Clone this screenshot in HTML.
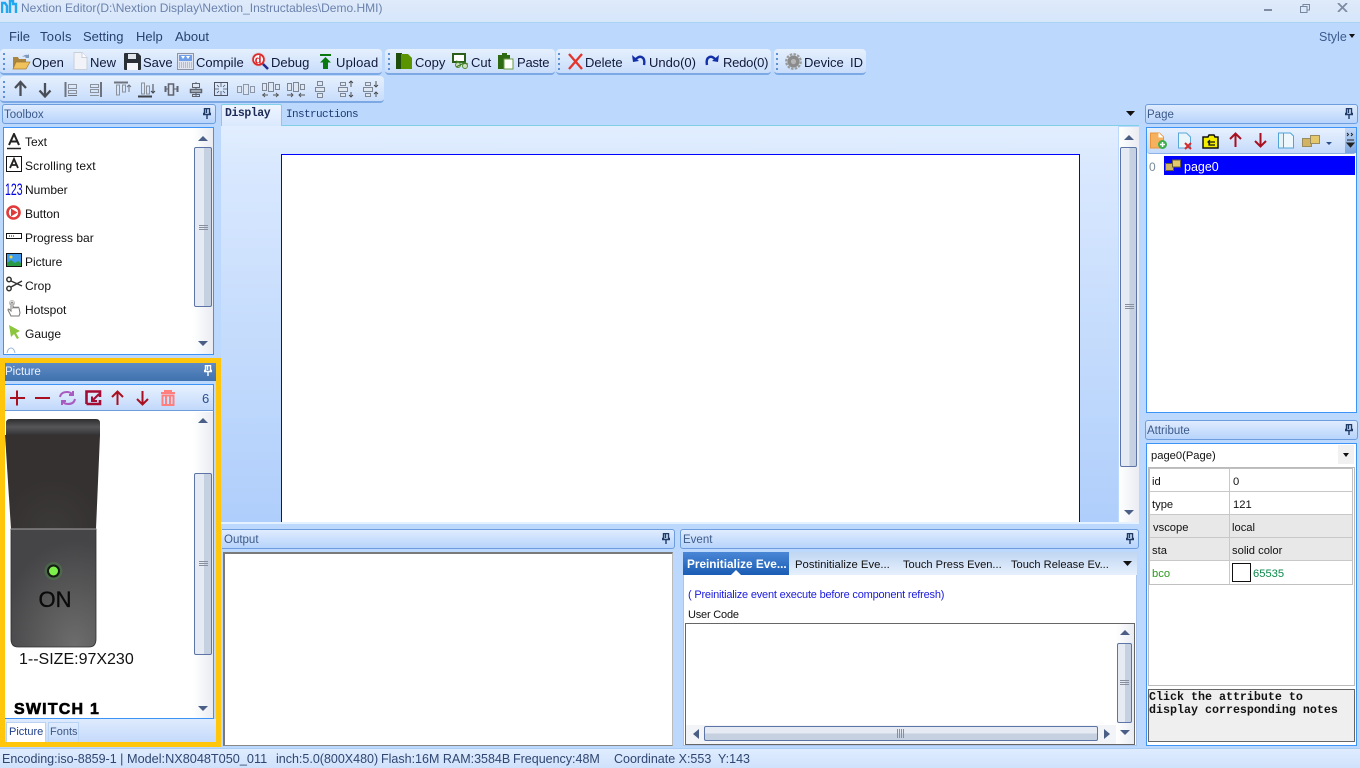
<!DOCTYPE html>
<html><head><meta charset="utf-8"><title>Nextion Editor</title>
<style>
*{box-sizing:border-box}
html,body{margin:0;padding:0;width:1360px;height:768px;overflow:hidden}
body{position:relative;background:#bcd9fd;font:12px "Liberation Sans",sans-serif;color:#111}
.a,.t,svg.i{position:absolute}
.t{white-space:nowrap;line-height:16px}
.tb{font-size:13px;color:#11193a}
.bar{position:absolute;background:linear-gradient(#e6f0fd,#c8ddfb);border-radius:4px;border-bottom:2px solid #7ca8e4}
.grip{position:absolute;width:2px;height:18px;background:repeating-linear-gradient(#5b8fd6 0 2px,transparent 2px 5px)}
.hd{position:absolute;background:linear-gradient(#e0ecfe,#b7d4fc);border:1px solid #6d9ddd;border-radius:3px;color:#2c4a78;padding-left:1px;line-height:20px;font-size:11.500px}
.pin{position:absolute;width:8px;height:11px;right:4px;top:3px}
.pin path{stroke-width:1.400}
.pn{position:absolute;background:#fff;border:1px solid #3d94f6}
.sb{position:absolute;background:linear-gradient(90deg,#fff,#e9ecf2)}
.th{position:absolute;border:1px solid #5c75a6;border-radius:2px;background:linear-gradient(90deg,#e6eaf2 0 55%,#c5d0e0 55%)}
.ln{position:absolute;background:#c8c8c8}
.cell{position:absolute;font-size:11.200px;line-height:24px;padding-left:3px}
</style></head><body>

<!-- title bar -->
<div class="a" style="left:0;top:0;width:1360px;height:23px;background:linear-gradient(#dfeafa,#d6e6fb);border-bottom:1px solid #a9d2f2"></div>
<svg class="i" style="left:1px;top:0" width="17" height="14" viewBox="0 0 17 14"><path d="M1 13V3h3l2 3v7M9 13V1h3v3h3v9" fill="none" stroke="#22a8ee" stroke-width="2.400"/></svg>
<div class="t" style="left:21px;top:0;font-size:12px;color:#6b82ac">Nextion Editor(D:\Nextion Display\Nextion_Instructables\Demo.HMI)</div>
<div class="a" style="left:1264px;top:9px;width:8px;height:2px;background:#7d8ca3"></div>
<svg class="i" style="left:1300px;top:4px" width="10" height="9"><path d="M.5 2.500h6.500v6H.5zM3 2.500V.5h6.500v5.500H7" fill="none" stroke="#77879f"/></svg>
<svg class="i" style="left:1337px;top:3px" width="11" height="9"><path d="M1 0l9 9M10 0L1 9" stroke="#7d8ca3" stroke-width="1.800"/></svg>

<!-- menu -->
<div class="t tb" style="left:9px;top:29px;color:#28416e">File</div>
<div class="t tb" style="left:40px;top:29px;color:#28416e;letter-spacing:.3px">Tools</div>
<div class="t tb" style="left:83px;top:29px;color:#28416e">Setting</div>
<div class="t tb" style="left:136px;top:29px;color:#28416e">Help</div>
<div class="t tb" style="left:175px;top:29px;color:#28416e">About</div>
<div class="t tb" style="left:1319px;top:29px;color:#3c5a8e;font-size:12.500px">Style</div>
<svg class="i" style="left:1349px;top:34px" width="6" height="4"><path d="M0 0h6L3 4z" fill="#111"/></svg>

<!-- toolbar row 1 -->
<div class="bar" style="left:0;top:49px;width:382px;height:26px"></div>
<div class="grip" style="left:3px;top:53px"></div>
<svg class="i" style="left:12px;top:53px" width="19" height="17"><path d="M1 4h5l1 2h7v3H5L2 15H1z" fill="#a9853f"/><path d="M4 9h14l-4 7H1z" fill="#f0c25c" stroke="#a67c2e" stroke-width=".7"/><path d="M10 4q3-3 6-2l1-1v4h-4l1-1q-2-1-4 0z" fill="#7d99bd"/></svg>
<div class="t tb" style="left:32px;top:55px">Open</div>
<svg class="i" style="left:73px;top:52px" width="15" height="18"><path d="M1 .5h8l5 5v12H1z" fill="#f1f3f8" stroke="#c9cfdc"/><path d="M9 .5v5h5" fill="#fff" stroke="#c9cfdc"/></svg>
<div class="t tb" style="left:90px;top:55px">New</div>
<svg class="i" style="left:124px;top:53px" width="17" height="17"><path d="M0 1q0-1 1-1h13l3 3v13q0 1-1 1H1q-1 0-1-1z" fill="#2a3036"/><rect x="4" y="1" width="8" height="5" fill="#dfe4ea"/><rect x="3" y="10" width="11" height="7" fill="#f4f6fa"/></svg>
<div class="t tb" style="left:143px;top:55px">Save</div>
<svg class="i" style="left:177px;top:53px" width="17" height="17"><rect x=".5" y=".5" width="16" height="16" fill="#dfe4ee" stroke="#8d94a6"/><rect x="2" y="2" width="13" height="6" fill="#6f9fe8"/><path d="M4 3l2 3 2-3zM9 3l2 3 2-3z" fill="#fff"/><path d="M2 10h13M2 12h13M2 14h13" stroke="#8d94a6" stroke-dasharray="1 1"/></svg>
<div class="t tb" style="left:196px;top:55px">Compile</div>
<svg class="i" style="left:251px;top:52px" width="18" height="18"><circle cx="7.500" cy="7.500" r="6.800" fill="#e0292b" stroke="#d8d8e0"/><circle cx="7.500" cy="7.500" r="4.500" fill="#fff"/><text x="3.800" y="11.500" font-size="11" font-weight="bold" fill="#d8232a" font-family="Liberation Sans">d</text><path d="M12 12l5 5" stroke="#232a8a" stroke-width="2.500"/></svg>
<div class="t tb" style="left:271px;top:55px">Debug</div>
<svg class="i" style="left:319px;top:54px" width="13" height="15"><path d="M1 1h11" stroke="#0a7a10" stroke-width="2"/><path d="M6.500 3L12 8.500H9V15H4V8.500H1z" fill="#0a7a10"/></svg>
<div class="t tb" style="left:336px;top:55px;letter-spacing:.2px">Upload</div>

<div class="bar" style="left:385px;top:49px;width:170px;height:26px"></div>
<div class="grip" style="left:388px;top:53px"></div>
<svg class="i" style="left:396px;top:53px" width="17" height="17"><path d="M0 0h6v16H0z" fill="#1f4d0b"/><path d="M5 1h7l4 4v11H5z" fill="#5a9400"/></svg>
<div class="t tb" style="left:415px;top:55px">Copy</div>
<svg class="i" style="left:452px;top:53px" width="17" height="17"><path d="M1 1h12v8H1z" fill="#fff" stroke="#2b5e1a" stroke-width="2"/><circle cx="6" cy="12" r="2.500" fill="#cfe0c0" stroke="#4f8a32"/><circle cx="13" cy="13" r="2.500" fill="#cfe0c0" stroke="#4f8a32"/><path d="M4 8l12 3M4 14l10-5" stroke="#3c7a26"/></svg>
<div class="t tb" style="left:471px;top:55px">Cut</div>
<svg class="i" style="left:498px;top:53px" width="16" height="17"><path d="M0 2h4V0h5v2h3v14H0z" fill="#2e6a14"/><path d="M6 6h9v10H6z" fill="#fff" stroke="#6a9a48"/></svg>
<div class="t tb" style="left:517px;top:55px;letter-spacing:-.2px">Paste</div>

<div class="bar" style="left:556px;top:49px;width:215px;height:26px"></div>
<div class="grip" style="left:558px;top:53px"></div>
<svg class="i" style="left:568px;top:53px" width="15" height="17"><path d="M1 1l13 15M14 1L1 16" stroke="#e2342c" stroke-width="2.300"/></svg>
<div class="t tb" style="left:585px;top:55px">Delete</div>
<svg class="i" style="left:632px;top:54px" width="14" height="13"><path d="M4 5q4-4 7-1 2 2 1 7" fill="none" stroke="#1430a8" stroke-width="2.400"/><path d="M0 1l1 7 6-1z" fill="#1430a8"/></svg>
<div class="t tb" style="left:649px;top:55px">Undo(0)</div>
<svg class="i" style="left:705px;top:54px" width="14" height="13"><path d="M10 5Q6 1 3 4q-2 2-1 7" fill="none" stroke="#1430a8" stroke-width="2.400"/><path d="M14 1l-1 7-6-1z" fill="#1430a8"/></svg>
<div class="t tb" style="left:723px;top:55px;letter-spacing:-.25px">Redo(0)</div>

<div class="bar" style="left:774px;top:49px;width:92px;height:26px"></div>
<div class="grip" style="left:776px;top:53px"></div>
<svg class="i" style="left:785px;top:53px" width="17" height="17"><circle cx="8.500" cy="8.500" r="6" fill="#8b8b8b"/><circle cx="8.500" cy="8.500" r="7.300" fill="none" stroke="#9a9a9a" stroke-width="2.200" stroke-dasharray="2.500 1.300"/><circle cx="8.500" cy="8.500" r="2.600" fill="#b5b5b5"/></svg>
<div class="t tb" style="left:804px;top:55px">Device</div>
<div class="t tb" style="left:850px;top:55px">ID</div>

<!-- toolbar row 2 -->
<div class="bar" style="left:0;top:76px;width:384px;height:27px"></div>
<div class="grip" style="left:3px;top:81px"></div>
<svg class="i" style="left:12px;top:80px" width="372" height="18" fill="none" stroke="#4a4f57">
<path d="M8.500 16V3M3 8l5.500-6L14 8M33 3v13M27.500 10.500L33 16.500l5.500-6" stroke-width="2.300"/>
<g stroke="#6d7480"><path d="M53.500 2v15" stroke-width="2"/><path d="M56.500 4.500h8v4h-8zM56.500 10.500h8v3h-8z" stroke="#8b929c"/><path d="M56 15.500h9" stroke-width="1"/>
<path d="M89 2v15" stroke-width="2"/><path d="M78.500 4.500h8v3h-8zM78.500 9.500h8v3h-8zM78 15.500h9" stroke="#8b929c"/></g>
<g stroke="#6d7480"><path d="M102 2.500h14" stroke-width="2"/><path d="M104.500 5v10h3V5zM110.500 5v7h3V5z" stroke="#8b929c"/><path d="M117 12V5M115 7l2-2 2 2"/></g>
<g stroke="#3e4248"><path d="M126 16.500h14" stroke-width="2"/><path d="M129.500 14V3h3v11zM134.500 14V6h3v8z" stroke="#8b929c"/><path d="M141 4v9M139 11l2 2 2-2"/></g>
<g stroke="#5e6470"><path d="M154 9h12"/><path d="M156.500 4v11h5V4z" fill="#dce6f5" stroke-width="1.600"/><path d="M153.500 6v6M165.500 6v6" stroke-width="2"/></g>
<g stroke="#5e6470"><path d="M184 2v15"/><path d="M180.500 3.500h7v4h-7z" fill="#dce6f5"/><path d="M178.500 9.500h11v3h-11z" fill="#b9c1cc" stroke-width="1.500"/><path d="M180.500 14.500h7v2h-7z"/></g>
<g stroke="#4c5260"><rect x="202.500" y="2.500" width="13" height="13"/><path d="M209 3v4M209 11v4M203 9h4M211 9h4M205 5l2 2M213 5l-2 2M205 13l2-2M213 13l-2-2" stroke-width=".8"/></g>
<g stroke="#8b97aa" fill="#dfe7f3"><rect x="225.500" y="6.500" width="4" height="6"/><rect x="231.500" y="4.500" width="5" height="10"/><rect x="238.500" y="6.500" width="4" height="6"/></g>
<g stroke="#7d8796" fill="#dfe7f3"><rect x="250.500" y="3.500" width="4" height="7"/><rect x="256.500" y="2.500" width="5" height="9"/><rect x="263.500" y="4.500" width="4" height="5"/></g><path d="M250 15h6M253 13l-2 2 2 2M261 15h6M264 13l2 2-2 2" stroke="#555" stroke-width=".9"/>
<g stroke="#7d8796" fill="#dfe7f3"><rect x="275.500" y="3.500" width="4" height="7"/><rect x="281.500" y="2.500" width="5" height="9"/><rect x="288.500" y="4.500" width="4" height="5"/></g><path d="M275 15h6M279 13l2 2-2 2M287 15h6M289 13l-2 2 2 2" stroke="#555" stroke-width=".9"/>
<g stroke="#7d8796" fill="#dfe7f3"><rect x="305.500" y="1.500" width="5" height="4"/><rect x="303.500" y="7.500" width="9" height="4"/><rect x="305.500" y="13.500" width="5" height="4"/></g>
<g stroke="#7d8796" fill="#dfe7f3"><rect x="328.500" y="2.500" width="5" height="3"/><rect x="326.500" y="7.500" width="9" height="4"/><rect x="328.500" y="13.500" width="5" height="3"/></g>
<path d="M339 1v6M337 3l2-2 2 2M339 12v5M337 15l2 2 2-2" stroke="#444" stroke-width=".9"/>
<g stroke="#7d8796" fill="#dfe7f3"><rect x="353.500" y="2.500" width="5" height="3"/><rect x="351.500" y="7.500" width="9" height="4"/><rect x="353.500" y="13.500" width="5" height="3"/></g>
<path d="M364 1v6M362 5l2 2 2-2M364 12v5M362 14l2-2 2 2" stroke="#444" stroke-width=".9"/>
</svg>

<!-- toolbox -->
<div class="hd" style="left:2px;top:104px;width:214px;height:20px;color:#3c5a8a">Toolbox<svg class="pin" viewBox="0 0 8 11"><path d="M1.500.5h5v5h1v1H.5v-1h1zM4 7v4M3.500 1v4" fill="none" stroke="#1f3b66"/></svg></div>
<div class="pn" style="left:3px;top:127px;width:211px;height:228px;overflow:hidden"></div>
<svg class="i" style="left:6px;top:133px" width="17" height="17"><path d="M3 12L8 1l5 11M5 8.500h6" fill="none" stroke="#222" stroke-width="2"/><path d="M1 15.500h14" stroke="#222" stroke-width="1.500"/></svg>
<div class="t" style="left:25px;top:134px">Text</div>
<svg class="i" style="left:6px;top:156px" width="16" height="16"><rect x=".5" y=".5" width="15" height="15" fill="#fff" stroke="#111"/><path d="M4 12l4-9 4 9M5.500 9h5" fill="none" stroke="#222" stroke-width="1.800"/></svg>
<div class="t" style="left:25px;top:158px;letter-spacing:.15px">Scrolling text</div>
<div class="t" style="left:5px;top:181px;font-size:17px;line-height:17px;color:#0000e0;transform:scaleX(.62);transform-origin:left top">123</div>
<div class="t" style="left:25px;top:182px">Number</div>
<svg class="i" style="left:6px;top:205px" width="15" height="15"><circle cx="7.500" cy="7.500" r="6" fill="#fff" stroke="#e03a3a" stroke-width="2.600"/><path d="M5 3.500l6.500 4-6.500 4z" fill="#e03a3a"/></svg>
<div class="t" style="left:25px;top:206px">Button</div>
<svg class="i" style="left:6px;top:233px" width="16" height="7"><rect x=".5" y=".5" width="15" height="5" fill="#fff" stroke="#111"/><path d="M3 3h5" stroke="#111" stroke-dasharray="1 1"/></svg>
<div class="t" style="left:25px;top:230px">Progress bar</div>
<svg class="i" style="left:6px;top:253px" width="16" height="14"><rect width="16" height="14" fill="#111"/><rect x="1" y="1" width="14" height="12" fill="#3f9bea"/><path d="M1 13V10l4-3 4 3 3-2 3 2v3z" fill="#2a9a44"/><circle cx="5" cy="4" r="1.500" fill="#f3d63a"/></svg>
<div class="t" style="left:25px;top:254px">Picture</div>
<svg class="i" style="left:6px;top:276px" width="17" height="16" fill="none" stroke="#333" stroke-width="1.500"><circle cx="3" cy="3.500" r="2.200"/><circle cx="3" cy="12.500" r="2.200"/><path d="M5 5l11 5M5 11L16 5"/></svg>
<div class="t" style="left:25px;top:278px">Crop</div>
<svg class="i" style="left:7px;top:300px" width="15" height="17" fill="none" stroke="#777"><path d="M4 16L1 10q0-2 2 0l1 1V3q1-2 2 0v5l1-1 1 1 1-1 1 1 1-1 1 1 1 5-1 3z" fill="#fff"/><circle cx="5" cy="3" r="2.500" stroke="#bbb"/></svg>
<div class="t" style="left:25px;top:302px">Hotspot</div>
<svg class="i" style="left:8px;top:325px" width="13" height="14"><path d="M1 0l11 6-4 2 3 5-2 1-3-5-3 3z" fill="#8cc63f"/></svg>
<div class="t" style="left:25px;top:326px">Gauge</div>
<svg class="i" style="left:6px;top:347px" width="10" height="6"><path d="M1 6q1-5 4-5t4 5" fill="none" stroke="#9cb6d8"/></svg>
<!-- toolbox scrollbar -->
<div class="sb" style="left:193px;top:128px;width:20px;height:226px"></div>
<svg class="i" style="left:198px;top:136px" width="10" height="6"><path d="M0 5l5-5 5 5z" fill="#4a5e86"/></svg>
<div class="th" style="left:194px;top:147px;width:18px;height:160px"></div>
<div class="a" style="left:199px;top:225px;width:9px;height:6px;background:repeating-linear-gradient(#8890a0 0 1px,transparent 1px 2px)"></div>
<svg class="i" style="left:198px;top:341px" width="10" height="6"><path d="M0 0l5 5 5-5z" fill="#4a5e86"/></svg>

<!-- picture panel (yellow highlight) -->
<div class="a" style="left:0;top:358px;width:221px;height:389px;border:5px solid #ffc60b;background:#bcd9fd"></div>
<div class="a" style="left:5px;top:363px;width:211px;height:18px;background:linear-gradient(#5f8ac3,#3f72ae);color:#e9f0fb;line-height:19px;font-size:11.500px">Picture<svg class="pin" style="right:4px;top:2px" viewBox="0 0 8 11"><path d="M1.500.5h5v5h1v1H.5v-1h1zM4 7v4M3.500 1v4" fill="none" stroke="#fff"/></svg></div>
<div class="a" style="left:5px;top:384px;width:209px;height:335px;background:#fff;border:1px solid #3d94f6;border-left:0"></div>
<div class="a" style="left:5px;top:385px;width:208px;height:26px;background:linear-gradient(#e8f1fe,#c2d9fb);border-bottom:1px solid #6d9ddd"></div>
<svg class="i" style="left:9px;top:390px" width="170" height="16" fill="none">
<path d="M8 .5v15M1 8h15M26 8h15" stroke="#a80f1f" stroke-width="2"/>
<path d="M51 7q1-5 7-5 3 0 5 2M66 9q-1 5-7 5-3 0-5-2M64 1v4h-4M53 15v-4h4" stroke="#a85cc0" stroke-width="2"/>
<path d="M77.500 14V1.500H91V7M77.500 14H91V10" stroke="#a50c34" stroke-width="2.600"/><path d="M90 4l-7 7M83 6.500V11h5" stroke="#a50c34" stroke-width="2"/>
<path d="M108.500 15V2M103 7l5.500-5.500L114 7M133.500 1v13M128 9l5.500 5.500L139 9" stroke="#a80f1f" stroke-width="2"/>
<path d="M152 3h14M156 3V1h6v2M153.500 5.500h11V15h-11zM157 6v9M161 6v9" stroke="#ff7f7f" stroke-width="2"/>
</svg>
<div class="t" style="left:202px;top:391px;color:#2d4f8c;font-size:13px">6</div>

<svg class="i" style="left:5px;top:418px" width="96" height="232" viewBox="0 0 96 232">
<defs><linearGradient id="g1" x1="0" x2="0" y1="0" y2="1"><stop offset="0" stop-color="#2d2c2d"/><stop offset=".5" stop-color="#57575a"/><stop offset="1" stop-color="#343335"/></linearGradient>
<radialGradient id="g2" cx=".75" cy="1" r=".9"><stop offset="0" stop-color="#6d6d6d"/><stop offset="1" stop-color="#454547"/></radialGradient>
<radialGradient id="g3" cx=".5" cy="1" r=".55"><stop offset="0" stop-color="#3c3a38"/><stop offset="1" stop-color="#343130"/></radialGradient></defs>
<path d="M1 17V5q0-4 4-4h86q4 0 4 4v12z" fill="url(#g1)"/>
<path d="M0 17h95l-4 94H6z" fill="url(#g3)"/>
<path d="M6 111h85v110q0 8-7 8H13q-7 0-7-8z" fill="url(#g2)" stroke="#2e2e2e" stroke-width=".8"/>
<path d="M6 111h85" stroke="#a5a5a5"/>
<circle cx="48.500" cy="153" r="9" fill="#4b7a47" opacity=".55"/><circle cx="48.500" cy="153" r="6.500" fill="#141a12"/><circle cx="48.500" cy="153" r="4.500" fill="#7df04a"/>
<text x="33.500" y="189" font-family="Liberation Sans" font-size="22" fill="#0a0a0a" stroke="#0a0a0a" stroke-width=".3">ON</text>
</svg>
<div class="t" style="left:19px;top:652px;font-size:16px;color:#111">1--SIZE:97X230</div>
<div class="t" style="left:14px;top:702px;font-size:16px;font-weight:bold;color:#000;letter-spacing:1.200px;-webkit-text-stroke:.6px #000">SWITCH 1</div>
<div class="sb" style="left:193px;top:412px;width:20px;height:306px"></div>
<svg class="i" style="left:198px;top:418px" width="10" height="6"><path d="M0 5l5-5 5 5z" fill="#4a5e86"/></svg>
<div class="th" style="left:194px;top:473px;width:18px;height:182px"></div>
<div class="a" style="left:199px;top:561px;width:9px;height:6px;background:repeating-linear-gradient(#8890a0 0 1px,transparent 1px 2px)"></div>
<svg class="i" style="left:198px;top:706px" width="10" height="6"><path d="M0 0l5 5 5-5z" fill="#4a5e86"/></svg>
<div class="a" style="left:5px;top:719px;width:211px;height:23px;background:linear-gradient(#dfebfd,#c4dafb)"></div>
<div class="a" style="left:6px;top:722px;width:40px;height:20px;background:#fff;border:1px solid #b9d3f4;border-bottom:0"></div>
<div class="t" style="left:9px;top:724px;color:#20408a;font-size:11px">Picture</div>
<div class="a" style="left:48px;top:722px;width:31px;height:20px;background:linear-gradient(#e0ecfe,#c5dbfb);border:1px solid #b9d3f4;border-bottom:0"></div>
<div class="t" style="left:50px;top:724px;color:#3a5686;font-size:11px">Fonts</div>

<!-- center tabs -->
<div class="a" style="left:221px;top:104px;width:61px;height:22px;background:linear-gradient(#eef5ff,#dbe9fe);border:1px solid #7fcfe6;border-bottom:0;border-radius:2px 2px 0 0"></div>
<div class="t" style="left:225px;top:106px;font:bold 11.500px/16px 'Liberation Mono',monospace;letter-spacing:-.45px;color:#1d2a55">Display</div>
<div class="t" style="left:286px;top:107px;font:11px/16px 'Liberation Mono',monospace;letter-spacing:-.6px;color:#1d3a74">Instructions</div>
<svg class="i" style="left:1126px;top:111px" width="9" height="5"><path d="M0 0h9L4.500 5z" fill="#111"/></svg>
<div class="a" style="left:282px;top:125px;width:857px;height:1px;background:#7fcfe6"></div>
<div class="a" style="left:221px;top:126px;width:897px;height:397px;background:linear-gradient(#e2eeff 0,#d9e8fe 10%,#afcefb 100%)"></div>
<div class="a" style="left:281px;top:154px;width:799px;height:369px;background:#fff;border:1px solid #00f;border-bottom:0"></div>
<div class="sb" style="left:1119px;top:127px;width:20px;height:396px"></div>
<svg class="i" style="left:1124px;top:135px" width="10" height="6"><path d="M0 5l5-5 5 5z" fill="#4a5e86"/></svg>
<div class="th" style="left:1120px;top:147px;width:17px;height:320px"></div>
<div class="a" style="left:1125px;top:304px;width:9px;height:6px;background:repeating-linear-gradient(#8890a0 0 1px,transparent 1px 2px)"></div>
<svg class="i" style="left:1124px;top:510px" width="10" height="6"><path d="M0 0l5 5 5-5z" fill="#4a5e86"/></svg>
<div class="a" style="left:221px;top:522px;width:918px;height:2px;background:#e4f1ff"></div>

<!-- output -->
<div class="hd" style="left:222px;top:529px;width:453px;height:20px;border-left:0;border-radius:0 3px 3px 0;color:#3c5a8a;padding-left:2px">Output<svg class="pin" viewBox="0 0 8 11"><path d="M1.500.5h5v5h1v1H.5v-1h1zM4 7v4M3.500 1v4" fill="none" stroke="#1f3b66"/></svg></div>
<div class="a" style="left:223px;top:552px;width:450px;height:194px;background:#fff;border:2px solid #7a7a7a;border-right:1px solid #bbb;border-bottom:1px solid #888"></div>

<!-- event -->
<div class="hd" style="left:680px;top:529px;width:459px;height:20px;color:#3c5a8a;padding-left:2px">Event<svg class="pin" viewBox="0 0 8 11"><path d="M1.500.5h5v5h1v1H.5v-1h1zM4 7v4M3.500 1v4" fill="none" stroke="#1f3b66"/></svg></div>
<div class="a" style="left:683px;top:552px;width:454px;height:23px;background:linear-gradient(#c0d6f2,#e6f0fd)"></div>
<div class="a" style="left:683px;top:552px;width:106px;height:23px;background:linear-gradient(#4a87d6,#1a5cb4)"></div>
<svg class="i" style="left:730px;top:570px" width="12" height="6"><path d="M0 6l6-6 6 6z" fill="#fff"/></svg>
<div class="t" style="left:687px;top:556px;color:#fff;font-weight:bold;font-size:11.800px">Preinitialize Eve...</div>
<div class="t" style="left:795px;top:557px;font-size:11.300px">Postinitialize Eve...</div>
<div class="t" style="left:903px;top:557px;font-size:11.100px">Touch Press Even...</div>
<div class="t" style="left:1011px;top:557px;font-size:11.100px">Touch Release Ev...</div>
<svg class="i" style="left:1123px;top:561px" width="9" height="5"><path d="M0 0h9L4.500 5z" fill="#111"/></svg>
<div class="a" style="left:683px;top:575px;width:454px;height:171px;background:#fff;border:1px solid #a9c6ea;border-top:0"></div>
<div class="t" style="left:688px;top:587px;color:#1a1adc;font-size:11px;letter-spacing:-.2px">( Preinitialize event execute before component refresh)</div>
<div class="t" style="left:688px;top:607px;font-size:11px;letter-spacing:-.2px">User Code</div>
<div class="a" style="left:685px;top:623px;width:450px;height:122px;background:#fff;border:1px solid #666"></div>
<div class="sb" style="left:1116px;top:624px;width:18px;height:120px"></div>
<svg class="i" style="left:1120px;top:630px" width="10" height="6"><path d="M0 5l5-5 5 5z" fill="#4a5e86"/></svg>
<div class="th" style="left:1117px;top:643px;width:15px;height:80px"></div>
<div class="a" style="left:1120px;top:680px;width:9px;height:6px;background:repeating-linear-gradient(#8890a0 0 1px,transparent 1px 2px)"></div>
<svg class="i" style="left:1120px;top:730px" width="10" height="6"><path d="M0 0l5 5 5-5z" fill="#4a5e86"/></svg>
<div class="a" style="left:686px;top:725px;width:430px;height:19px;background:#f2f4f8"></div>
<svg class="i" style="left:693px;top:729px" width="6" height="10"><path d="M6 0L0 5l6 5z" fill="#4a5e86"/></svg>
<div class="a" style="left:704px;top:726px;width:394px;height:15px;border:1px solid #5c75a6;border-radius:2px;background:linear-gradient(#e6eaf2 0 50%,#c5d0e0 50%)"></div>
<div class="a" style="left:897px;top:729px;width:7px;height:9px;background:repeating-linear-gradient(90deg,#8890a0 0 1px,transparent 1px 2px)"></div>
<svg class="i" style="left:1104px;top:729px" width="6" height="10"><path d="M0 0l6 5-6 5z" fill="#4a5e86"/></svg>

<!-- page panel -->
<div class="hd" style="left:1145px;top:104px;width:213px;height:20px;color:#3c5a8a">Page<svg class="pin" viewBox="0 0 8 11"><path d="M1.500.5h5v5h1v1H.5v-1h1zM4 7v4M3.500 1v4" fill="none" stroke="#1f3b66"/></svg></div>
<div class="pn" style="left:1146px;top:127px;width:211px;height:286px"></div>
<div class="a" style="left:1147px;top:128px;width:209px;height:26px;background:linear-gradient(#e8f1fe,#c5dbfb);border-radius:3px;border-bottom:1px solid #8db2e6"></div>
<div class="a" style="left:1345px;top:128px;width:11px;height:25px;background:linear-gradient(#c6daf6,#7aa5e0)"></div>
<svg class="i" style="left:1346px;top:131px" width="9" height="20"><path d="M1 2l1.500 1.500L1 5M5 2l1.500 1.500L5 5" stroke="#222" fill="none"/><path d="M1 9h7M1 12h7L4.500 16z" stroke="#222" fill="#222"/></svg>
<svg class="i" style="left:1150px;top:132px" width="195" height="18" fill="none">
<path d="M.5 1h9l4 4v11H.5z" fill="#f6b15e" stroke="#e8963c"/><path d="M9 1v4h4" fill="#fff" stroke="#fff"/><circle cx="12.500" cy="12.500" r="4.500" fill="#3fae4e"/><path d="M12.500 10v5M10 12.500h5" stroke="#fff" stroke-width="1.500"/>
<path d="M28.500 1h8l4 4v11h-12z" fill="#eaf4fb" stroke="#5aa8d8"/><path d="M35 11l6 6M41 11l-6 6" stroke="#d42a2a" stroke-width="2"/>
<path d="M53 5h5l1-2h5l1 2h3v11H53z" fill="#f5ee00" stroke="#111" stroke-width="1.500"/><path d="M58 10h7M60 8l-2 2 2 2M59 10v3h6" stroke="#111" stroke-width="1.200"/>
<path d="M85.500 15V2M80 7l5.500-5.500L91 7M110.500 1v13M105 9l5.500 5.500L116 9" stroke="#a80f1f" stroke-width="2"/>
<path d="M128.500 1h5v15h-5z" fill="#e6f2fa" stroke="#52a3d6"/><path d="M133.500 1h7l3 3v12h-10z" fill="#eef7fc" stroke="#52a3d6"/>
<rect x="152.500" y="6.500" width="9" height="8" fill="#d0b464" stroke="#9a8a60"/><rect x="160.500" y="3.500" width="9" height="8" fill="#e5c76c" stroke="#9a8a60"/>
<path d="M176 10h6l-3 3z" fill="#2b4f8c"/>
</svg>
<div class="t" style="left:1149px;top:159px;color:#7a8a9a">0</div>
<div class="a" style="left:1164px;top:156px;width:191px;height:19px;background:#00f"></div>
<svg class="i" style="left:1165px;top:159px" width="16" height="12"><rect x=".5" y="4.500" width="8" height="7" fill="#d0b464" stroke="#665c3a"/><rect x="7.500" y="1" width="8" height="7" fill="#e5c76c" stroke="#665c3a"/></svg>
<div class="t" style="left:1184px;top:159px;color:#fff;font-size:12.500px">page0</div>

<!-- attribute -->
<div class="hd" style="left:1145px;top:420px;width:213px;height:20px;color:#3c5a8a">Attribute<svg class="pin" viewBox="0 0 8 11"><path d="M1.500.5h5v5h1v1H.5v-1h1zM4 7v4M3.500 1v4" fill="none" stroke="#1f3b66"/></svg></div>
<div class="pn" style="left:1146px;top:443px;width:211px;height:303px"></div>
<div class="t" style="left:1151px;top:448px;font-size:11.200px">page0(Page)</div>
<div class="a" style="left:1338px;top:445px;width:16px;height:19px;background:#f1f1f1"></div>
<svg class="i" style="left:1343px;top:453px" width="6" height="4"><path d="M0 0h6L3 4z" fill="#111"/></svg>
<div class="a" style="left:1148px;top:467px;width:207px;height:219px;border:1px solid #bbb"></div>
<div class="a" style="left:1149px;top:468px;width:204px;height:117px;background:#fff;border:1px solid #c0c0c0"></div>
<div class="a" style="left:1150px;top:515px;width:202px;height:46px;background:#e8e8e8"></div>
<div class="ln" style="left:1229px;top:469px;width:1px;height:115px"></div>
<div class="ln" style="left:1150px;top:491px;width:202px;height:1px"></div>
<div class="ln" style="left:1150px;top:514px;width:202px;height:1px"></div>
<div class="ln" style="left:1150px;top:537px;width:202px;height:1px"></div>
<div class="ln" style="left:1150px;top:560px;width:202px;height:1px"></div>
<div class="cell" style="left:1149px;top:470px">id</div><div class="cell" style="left:1230px;top:470px">0</div>
<div class="cell" style="left:1149px;top:493px">type</div><div class="cell" style="left:1230px;top:493px">121</div>
<div class="cell" style="left:1150px;top:516px">vscope</div><div class="cell" style="left:1229px;top:516px">local</div>
<div class="cell" style="left:1149px;top:539px">sta</div><div class="cell" style="left:1229px;top:539px">solid color</div>
<div class="cell" style="left:1149px;top:562px;color:#2a9a1a">bco</div>
<div class="a" style="left:1232px;top:563px;width:19px;height:19px;background:#fff;border:1px solid #111"></div>
<div class="cell" style="left:1250px;top:562px;color:#0a8a4a">65535</div>
<div class="a" style="left:1148px;top:689px;width:207px;height:53px;background:#efefef;border:1px solid #666"></div>
<div class="t" style="left:1149px;top:691px;font:bold 11.670px/12.500px 'Liberation Mono',monospace;color:#111;white-space:pre">Click the attribute to
display corresponding notes</div>

<!-- status bar -->
<div class="a" style="left:0;top:748px;width:1360px;height:20px;background:linear-gradient(#dfecfe,#cfe2fc);border-top:1px solid #a9cdf3"></div>
<div class="t" style="left:2px;top:751px;font-size:12.500px;color:#2f4670">Encoding:iso-8859-1 |</div>
<div class="t" style="left:127px;top:751px;font-size:12.700px;color:#2f4670">Model:NX8048T050_011</div>
<div class="t" style="left:276px;top:751px;font-size:12.500px;color:#2f4670">inch:5.0(800X480)</div>
<div class="t" style="left:381px;top:751px;font-size:12.500px;color:#2f4670">Flash:16M RAM:3584B</div>
<div class="t" style="left:513px;top:751px;font-size:12.500px;color:#2f4670">Frequency:48M</div>
<div class="t" style="left:614px;top:751px;font-size:12.500px;color:#2f4670">Coordinate X:553&nbsp; Y:143</div>
</body></html>
